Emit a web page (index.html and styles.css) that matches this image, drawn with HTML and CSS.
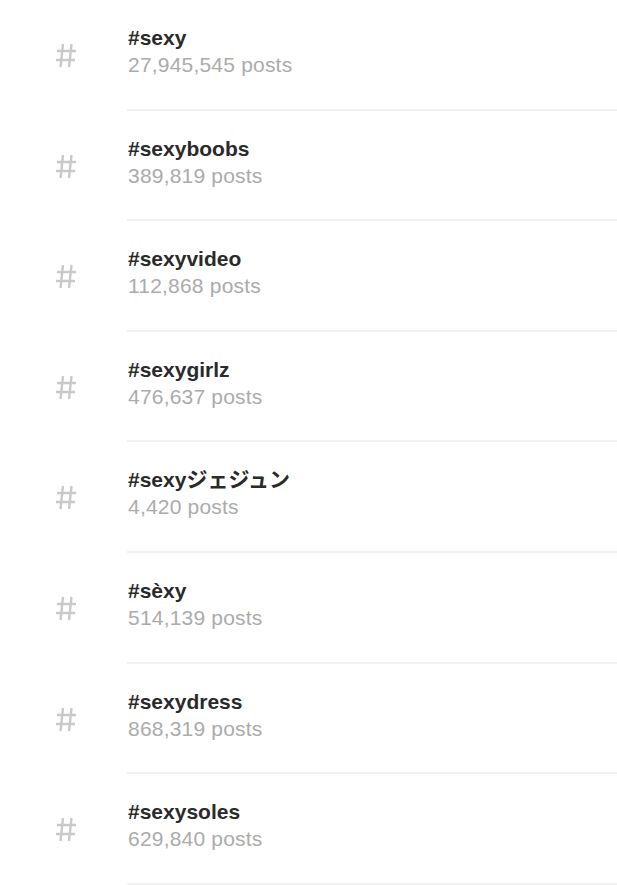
FILE: index.html
```html
<!DOCTYPE html>
<html lang="en">
<head>
<meta charset="utf-8">
<title>Hashtags</title>
<link rel="stylesheet" href="styles.css">
</head>
<body>
<ul class="list">
  <li class="row">
    <div class="icon-col"><svg class="hash" viewBox="0 0 22 25" width="22" height="25"><path d="M8 1 L5.5 24 M16.5 1 L14 24 M2 8 H21 M1 17 H20" /></svg></div>
    <div class="text"><div class="title">#sexy</div><div class="sub">27,945,545 posts</div></div>
  </li>
  <li class="row">
    <div class="icon-col"><svg class="hash" viewBox="0 0 22 25" width="22" height="25"><path d="M8 1 L5.5 24 M16.5 1 L14 24 M2 8 H21 M1 17 H20" /></svg></div>
    <div class="text"><div class="title">#sexyboobs</div><div class="sub">389,819 posts</div></div>
  </li>
  <li class="row">
    <div class="icon-col"><svg class="hash" viewBox="0 0 22 25" width="22" height="25"><path d="M8 1 L5.5 24 M16.5 1 L14 24 M2 8 H21 M1 17 H20" /></svg></div>
    <div class="text"><div class="title">#sexyvideo</div><div class="sub">112,868 posts</div></div>
  </li>
  <li class="row">
    <div class="icon-col"><svg class="hash" viewBox="0 0 22 25" width="22" height="25"><path d="M8 1 L5.5 24 M16.5 1 L14 24 M2 8 H21 M1 17 H20" /></svg></div>
    <div class="text"><div class="title">#sexygirlz</div><div class="sub">476,637 posts</div></div>
  </li>
  <li class="row">
    <div class="icon-col"><svg class="hash" viewBox="0 0 22 25" width="22" height="25"><path d="M8 1 L5.5 24 M16.5 1 L14 24 M2 8 H21 M1 17 H20" /></svg></div>
    <div class="text"><div class="title">#sexyジェジュン</div><div class="sub">4,420 posts</div></div>
  </li>
  <li class="row">
    <div class="icon-col"><svg class="hash" viewBox="0 0 22 25" width="22" height="25"><path d="M8 1 L5.5 24 M16.5 1 L14 24 M2 8 H21 M1 17 H20" /></svg></div>
    <div class="text"><div class="title">#sèxy</div><div class="sub">514,139 posts</div></div>
  </li>
  <li class="row">
    <div class="icon-col"><svg class="hash" viewBox="0 0 22 25" width="22" height="25"><path d="M8 1 L5.5 24 M16.5 1 L14 24 M2 8 H21 M1 17 H20" /></svg></div>
    <div class="text"><div class="title">#sexydress</div><div class="sub">868,319 posts</div></div>
  </li>
  <li class="row">
    <div class="icon-col"><svg class="hash" viewBox="0 0 22 25" width="22" height="25"><path d="M8 1 L5.5 24 M16.5 1 L14 24 M2 8 H21 M1 17 H20" /></svg></div>
    <div class="text"><div class="title">#sexysoles</div><div class="sub">629,840 posts</div></div>
  </li>
</ul>
</body>
</html>
```

FILE: styles.css
```css
html, body {
  margin: 0;
  padding: 0;
  background: #ffffff;
}

body {
  font-family: "Liberation Sans", Arial, "Noto Sans CJK JP", sans-serif;
  overflow: hidden;
}

.list {
  list-style: none;
  margin: 0;
  padding: 0;
}

.row {
  display: flex;
  height: 110.6px;
}

.icon-col {
  width: 127px;
  flex: none;
  box-sizing: border-box;
  padding-top: 43px;
  padding-left: 55px;
}

.hash {
  display: block;
  fill: none;
  stroke: #c9c9c9;
  stroke-width: 2.4;
}

.text {
  flex: 1;
  box-sizing: border-box;
  padding-top: 26px;
  padding-left: 1px;
  border-bottom: 2px solid #f1f1f1;
}

.title {
  font-size: 21px;
  line-height: 24px;
  font-weight: bold;
  color: #2a2a2a;
}

.sub {
  font-size: 21px;
  line-height: 24px;
  margin-top: 3px;
  color: #ababab;
  letter-spacing: 0.2px;
}
```
